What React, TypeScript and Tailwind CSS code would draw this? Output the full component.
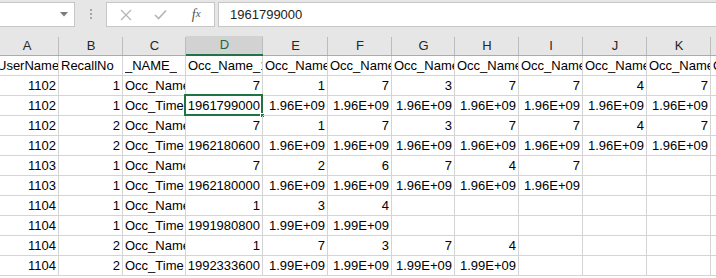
import React from "react";

const cols = [
  { key: "A", w: "w-[64px]" },
  { key: "B", w: "w-[64px]" },
  { key: "C", w: "w-[63px]" },
  { key: "D", w: "w-[77px]" },
  { key: "E", w: "w-[65px]" },
  { key: "F", w: "w-[64px]" },
  { key: "G", w: "w-[63px]" },
  { key: "H", w: "w-[64px]" },
  { key: "I", w: "w-[64px]" },
  { key: "J", w: "w-[64px]" },
  { key: "K", w: "w-[64px]" },
  { key: "L", w: "w-[64px]" },
];

type Cell = string | number | null;

const header: Cell[] = [
  "UserName",
  "RecallNo",
  "_NAME_",
  "Occ_Name_1",
  "Occ_Name_2",
  "Occ_Name_3",
  "Occ_Name_4",
  "Occ_Name_5",
  "Occ_Name_6",
  "Occ_Name_7",
  "Occ_Name_8",
  "Occ_Name_9",
];

const T96 = "1.96E+09";
const T99 = "1.99E+09";

const rows: Cell[][] = [
  [1102, 1, "Occ_Name", 7, 1, 7, 3, 7, 7, 4, 7],
  [1102, 1, "Occ_Time", 1961799000, T96, T96, T96, T96, T96, T96, T96],
  [1102, 2, "Occ_Name", 7, 1, 7, 3, 7, 7, 4, 7],
  [1102, 2, "Occ_Time", 1962180600, T96, T96, T96, T96, T96, T96, T96],
  [1103, 1, "Occ_Name", 7, 2, 6, 7, 4, 7],
  [1103, 1, "Occ_Time", 1962180000, T96, T96, T96, T96, T96],
  [1104, 1, "Occ_Name", 1, 3, 4],
  [1104, 1, "Occ_Time", 1991980800, T99, T99],
  [1104, 2, "Occ_Name", 1, 7, 3, 7, 4],
  [1104, 2, "Occ_Time", 1992333600, T99, T99, T99, T99],
];

const isNumber = (v: Cell) => typeof v === "number" || (typeof v === "string" && /^[\d.E+]+$/.test(v));

function Toolbar() {
  return (
    <div className="flex h-[36px] items-start bg-[#e6e6e6] pt-[2px]">
      {/* name box */}
      <div className="ml-[-1px] flex h-[25px] w-[76px] items-center justify-end border border-[#c6c6c6] bg-white pr-[6px]">
        <svg width="8" height="5" viewBox="0 0 8 5">
          <path d="M0 0 L8 0 L4 4.5 Z" fill="#7a7a7a" />
        </svg>
      </div>
      <div className="flex w-[31px] flex-col items-center gap-[2px] pt-[7px]">
        <span className="h-[2px] w-[2px] bg-[#a6a6a6]" />
        <span className="h-[2px] w-[2px] bg-[#a6a6a6]" />
        <span className="h-[2px] w-[2px] bg-[#a6a6a6]" />
      </div>
      {/* cancel / enter / fx */}
      <div className="flex h-[25px] w-[109px] items-center border border-[#c6c6c6] bg-white">
        <div className="flex w-[36px] justify-center pl-[2px]">
          <svg width="12" height="12" viewBox="0 0 12 12">
            <path d="M1 1 L11 11 M11 1 L1 11" stroke="#b4b4b4" strokeWidth="1.2" fill="none" />
          </svg>
        </div>
        <div className="flex w-[36px] justify-center">
          <svg width="13" height="11" viewBox="0 0 13 11">
            <path d="M1 6 L4.6 9.6 L12 1.5" stroke="#b4b4b4" strokeWidth="1.6" fill="none" />
          </svg>
        </div>
        <div className="flex w-[36px] justify-center font-['Liberation_Serif',serif] text-[14px] italic leading-none text-[#555]">
          f<span className="text-[11px]">x</span>
        </div>
      </div>
      {/* formula input */}
      <div className="ml-[3px] flex h-[25px] flex-1 items-center border border-r-0 border-[#c6c6c6] bg-white pl-[11px] text-[13px] text-[#222]">
        1961799000
      </div>
    </div>
  );
}

function ColumnHeaders() {
  return (
    <div className="flex h-[20px] bg-[#e6e6e6]">
      {cols.map((c) => {
        const sel = c.key === "D";
        return (
          <div
            key={c.key}
            className={`${c.w} relative flex shrink-0 items-center justify-center text-[13px] ${
              sel
                ? "border-b-2 border-b-[#217346] bg-[#d2d2d2] text-[#1e6b3c]"
                : "border-b border-b-[#ababab] text-[#262626]"
            }`}
          >
            {c.key}
            <span className="absolute right-0 top-[1px] bottom-0 w-px bg-[#bcbcbc]" />
          </div>
        );
      })}
    </div>
  );
}

function GridRow({ cells, rowIndex }: { cells: Cell[]; rowIndex: number }) {
  return (
    <div className="flex h-[20px]">
      {cols.map((c, i) => {
        const v = cells[i] ?? null;
        const num = v !== null && isNumber(v);
        const selected = rowIndex === 2 && c.key === "D";
        return (
          <div
            key={c.key}
            className={`${c.w} relative flex shrink-0 items-center whitespace-nowrap border-r border-b border-[#d4d4d4] text-[13px] text-black ${
              num ? "justify-end pr-[2px]" : "overflow-hidden pl-[2px]"
            }`}
          >
            {v !== null && <span className={num ? "" : "overflow-hidden"}>{v}</span>}
            {selected && (
              <>
                <span className="absolute left-[-2px] top-[-2px] right-[-1px] bottom-[-1px] border-2 border-[#217346]" />
                <span className="absolute right-[-3px] bottom-[-3px] h-[5px] w-[5px] border border-white bg-[#217346]" />
              </>
            )}
          </div>
        );
      })}
    </div>
  );
}

export default function App() {
  return (
    <div className="h-[278px] w-[716px] overflow-hidden bg-white font-['Liberation_Sans',Arial,sans-serif]">
      <Toolbar />
      <div className="ml-[-5px] w-[790px]">
        <ColumnHeaders />
        <GridRow cells={header} rowIndex={0} />
        {rows.map((r, i) => (
          <GridRow key={i} cells={r} rowIndex={i + 1} />
        ))}
      </div>
    </div>
  );
}
